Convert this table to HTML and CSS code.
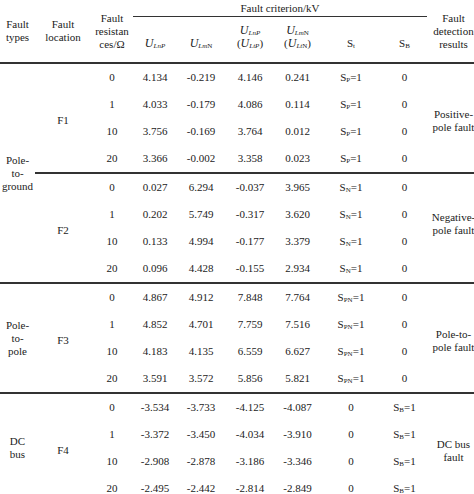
FILE: index.html
```html
<!DOCTYPE html>
<html>
<head>
<meta charset="utf-8">
<link rel="stylesheet" href="styles.css">
</head>
<body>
<table class="tbl">
  <colgroup>
    <col class="c-type"><col class="c-loc"><col class="c-res">
    <col class="c-u1"><col class="c-u2"><col class="c-u3"><col class="c-u4">
    <col class="c-st"><col class="c-sb"><col class="c-out">
  </colgroup>
  <thead>
    <tr class="hr1">
      <th rowspan="2" class="hb">Fault<br>types</th>
      <th rowspan="2" class="hb">Fault<br>location</th>
      <th rowspan="2" class="hb">Fault<br>resistan<br>ces/Ω</th>
      <th colspan="6" class="crit">Fault criterion/kV</th>
      <th rowspan="2" class="hb">Fault<br>detection<br>results</th>
    </tr>
    <tr class="hr2">
      <th class="hb sub"><i class="u">U</i><sub><i>LnP</i></sub></th>
      <th class="hb sub"><i class="u">U</i><sub><i>Lm</i>N</sub></th>
      <th class="hb sub"><i class="u">U</i><sub><i>LnP</i></sub><br>(<i class="u">U</i><sub><i>LtP</i></sub>)</th>
      <th class="hb sub"><i class="u">U</i><sub><i>Lm</i>N</sub><br>(<i class="u">U</i><sub><i>Lt</i>N</sub>)</th>
      <th class="hb sub">S<sub>t</sub></th>
      <th class="hb sub">S<sub>B</sub></th>
    </tr>
  </thead>
  <tbody>
    <tr class="r">
      <td rowspan="8" class="e">Pole-<br>to-<br>ground</td>
      <td rowspan="4" class="e lbl">F1</td>
      <td>0</td><td>4.134</td><td>-0.219</td><td>4.146</td><td>0.241</td><td>S<sub>P</sub>=1</td><td>0</td>
      <td rowspan="4" class="e out">Positive-<br>pole fault</td>
    </tr>
    <tr class="r"><td>1</td><td>4.033</td><td>-0.179</td><td>4.086</td><td>0.114</td><td>S<sub>P</sub>=1</td><td>0</td></tr>
    <tr class="r"><td>10</td><td>3.756</td><td>-0.169</td><td>3.764</td><td>0.012</td><td>S<sub>P</sub>=1</td><td>0</td></tr>
    <tr class="r end"><td class="e">20</td><td class="e">3.366</td><td class="e">-0.002</td><td class="e">3.358</td><td class="e">0.023</td><td class="e">S<sub>P</sub>=1</td><td class="e">0</td></tr>

    <tr class="r">
      <td rowspan="4" class="e lbl">F2</td>
      <td>0</td><td>0.027</td><td>6.294</td><td>-0.037</td><td>3.965</td><td>S<sub>N</sub>=1</td><td>0</td>
      <td rowspan="4" class="e out-up">Negative-<br>pole fault</td>
    </tr>
    <tr class="r"><td>1</td><td>0.202</td><td>5.749</td><td>-0.317</td><td>3.620</td><td>S<sub>N</sub>=1</td><td>0</td></tr>
    <tr class="r"><td>10</td><td>0.133</td><td>4.994</td><td>-0.177</td><td>3.379</td><td>S<sub>N</sub>=1</td><td>0</td></tr>
    <tr class="r end"><td class="e">20</td><td class="e">0.096</td><td class="e">4.428</td><td class="e">-0.155</td><td class="e">2.934</td><td class="e">S<sub>N</sub>=1</td><td class="e">0</td></tr>

    <tr class="r">
      <td rowspan="4" class="e">Pole-<br>to-<br>pole</td>
      <td rowspan="4" class="e lbl">F3</td>
      <td>0</td><td>4.867</td><td>4.912</td><td>7.848</td><td>7.764</td><td>S<sub>PN</sub>=1</td><td>0</td>
      <td rowspan="4" class="e out">Pole-to-<br>pole fault</td>
    </tr>
    <tr class="r"><td>1</td><td>4.852</td><td>4.701</td><td>7.759</td><td>7.516</td><td>S<sub>PN</sub>=1</td><td>0</td></tr>
    <tr class="r"><td>10</td><td>4.183</td><td>4.135</td><td>6.559</td><td>6.627</td><td>S<sub>PN</sub>=1</td><td>0</td></tr>
    <tr class="r end"><td class="e">20</td><td class="e">3.591</td><td class="e">3.572</td><td class="e">5.856</td><td class="e">5.821</td><td class="e">S<sub>PN</sub>=1</td><td class="e">0</td></tr>

    <tr class="r">
      <td rowspan="4">DC<br>bus</td>
      <td rowspan="4" class="lbl">F4</td>
      <td>0</td><td>-3.534</td><td>-3.733</td><td>-4.125</td><td>-4.087</td><td>0</td><td>S<sub>B</sub>=1</td>
      <td rowspan="4" class="out">DC bus<br>fault</td>
    </tr>
    <tr class="r"><td>1</td><td>-3.372</td><td>-3.450</td><td>-4.034</td><td>-3.910</td><td>0</td><td>S<sub>B</sub>=1</td></tr>
    <tr class="r"><td>10</td><td>-2.908</td><td>-2.878</td><td>-3.186</td><td>-3.346</td><td>0</td><td>S<sub>B</sub>=1</td></tr>
    <tr class="r"><td>20</td><td>-2.495</td><td>-2.442</td><td>-2.814</td><td>-2.849</td><td>0</td><td>S<sub>B</sub>=1</td></tr>
  </tbody>
</table>
</body>
</html>
```

FILE: styles.css
```css
html, body {
  margin: 0;
  padding: 0;
  overflow: hidden;
  background: #ffffff;
}

body {
  width: 474px;
  height: 494px;
  font-family: "Liberation Serif", "Times New Roman", serif;
  font-size: 11px;
  color: #222222;
}

.tbl {
  border-collapse: separate;
  border-spacing: 0;
  table-layout: fixed;
  width: 480px;
}

.c-type { width: 35px; }
.c-loc { width: 56px; }
.c-res { width: 42px; }
.c-u1 { width: 44px; }
.c-u2 { width: 48px; }
.c-u3 { width: 50px; }
.c-u4 { width: 45px; }
.c-st { width: 62px; }
.c-sb { width: 45px; }
.c-out { width: 53px; }

.tbl th,
.tbl td {
  padding: 0;
  text-align: center;
  vertical-align: middle;
  line-height: 13px;
  font-weight: normal;
  white-space: nowrap;
}

.hr1 { height: 17px; }
.hr2 { height: 47px; }

.crit {
  border-bottom: 1.5px solid #333333;
}

.hb {
  border-bottom: 2px solid #333333;
}

.sub {
  vertical-align: bottom !important;
  padding-bottom: 12px !important;
}

.u {
  font-size: 12px;
}

sub {
  font-size: 7px;
  line-height: 0;
  vertical-align: -1px;
}

.r { height: 27px; }
.r.end { height: 29px; }

.e {
  border-bottom: 2px solid #333333;
}

.lbl {
  padding-top: 4px !important;
}

.out {
  padding-top: 6px !important;
}

.out-up {
  padding-bottom: 9px !important;
}
```
